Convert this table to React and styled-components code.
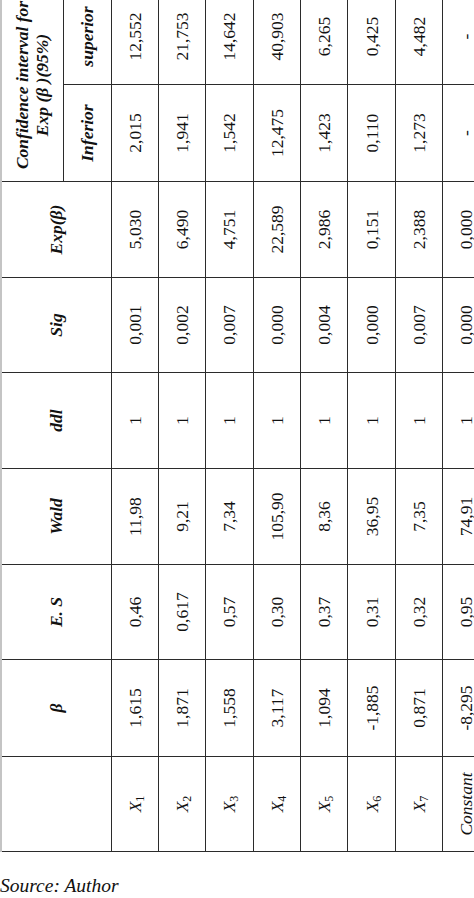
import React from "react";
import styled, { createGlobalStyle } from "styled-components";

const GlobalStyle = createGlobalStyle`
  html, body { margin: 0; padding: 0; background: #ffffff; }
  body { font-family: "Liberation Serif", "Times New Roman", serif; color: #111; }
`;

const Page = styled.div`
  display: flex;
  flex-direction: column;
  width: 474px;
`;

const TableFrame = styled.div`
  width: 474px;
  height: 852px;
  overflow: hidden;
`;

const RotatedTable = styled.table`
  border-collapse: collapse;
  table-layout: fixed;
  width: 863px;
  transform-origin: 0 0;
  transform: translate(0, 852px) rotate(-90deg);
  border-top: 2px solid #c4c4c4;
  font-family: "Liberation Serif", "Times New Roman", serif;
  font-size: 17.5px;
  line-height: 20px;
`;

const Cell = styled.td`
  border: 1px solid #2b2b2b;
  padding: 0 2px;
  text-align: center;
  vertical-align: middle;
  font-style: ${(p) => (p.$italic ? "italic" : "normal")};
  white-space: nowrap;
`;

const HeadCell = styled.th`
  border: 1px solid #2b2b2b;
  padding: 0 2px;
  text-align: center;
  vertical-align: middle;
  font-weight: bold;
  font-style: italic;
  white-space: nowrap;
`;

const Row = styled.tr`
  height: ${(p) => p.$h}px;
`;

const Sub = styled.sub`
  font-style: normal;
  font-size: 12px;
  vertical-align: -3px;
  line-height: 0;
`;

const Source = styled.p`
  margin: 23px 0 0 0;
  font-family: "Liberation Serif", "Times New Roman", serif;
  font-style: italic;
  font-size: 19.5px;
  line-height: 22px;
  color: #111;
`;

const widths = [95, 97, 95, 96, 96, 95, 96, 97, 96];

const rows = [
  ["1", ["1,615", "0,46", "11,98", "1", "0,001", "5,030", "2,015", "12,552"]],
  ["2", ["1,871", "0,617", "9,21", "1", "0,002", "6,490", "1,941", "21,753"]],
  ["3", ["1,558", "0,57", "7,34", "1", "0,007", "4,751", "1,542", "14,642"]],
  ["4", ["3,117", "0,30", "105,90", "1", "0,000", "22,589", "12,475", "40,903"]],
  ["5", ["1,094", "0,37", "8,36", "1", "0,004", "2,986", "1,423", "6,265"]],
  ["6", ["-1,885", "0,31", "36,95", "1", "0,000", "0,151", "0,110", "0,425"]],
  ["7", ["0,871", "0,32", "7,35", "1", "0,007", "2,388", "1,273", "4,482"]],
  [null, ["-8,295", "0,95", "74,91", "1", "0,000", "0,000", "-", "-"]],
];

const heads = ["β", "E. S", "Wald", "ddl", "Sig", "Exp(β)"];

export default function App() {
  return (
    <>
      <GlobalStyle />
      <Page>
        <TableFrame>
          <RotatedTable>
            <colgroup>
              {widths.map((w, i) => (
                <col key={i} style={{ width: w }} />
              ))}
            </colgroup>
            <thead>
              <Row $h={62}>
                <HeadCell rowSpan={2}></HeadCell>
                {heads.map((h) => (
                  <HeadCell key={h} rowSpan={2}>
                    {h}
                  </HeadCell>
                ))}
                <HeadCell colSpan={2}>
                  Confidence interval for
                  <br />
                  Exp (β )(95%)
                </HeadCell>
              </Row>
              <Row $h={48}>
                <HeadCell>Inferior</HeadCell>
                <HeadCell>superior</HeadCell>
              </Row>
            </thead>
            <tbody>
              {rows.map(([sub, vals], i) => (
                <Row key={i} $h={47.4}>
                  <Cell $italic>
                    {sub ? (
                      <>
                        X<Sub>{sub}</Sub>
                      </>
                    ) : (
                      "Constant"
                    )}
                  </Cell>
                  {vals.map((v, j) => (
                    <Cell key={j}>{v}</Cell>
                  ))}
                </Row>
              ))}
            </tbody>
          </RotatedTable>
        </TableFrame>
        <Source>Source: Author</Source>
      </Page>
    </>
  );
}
